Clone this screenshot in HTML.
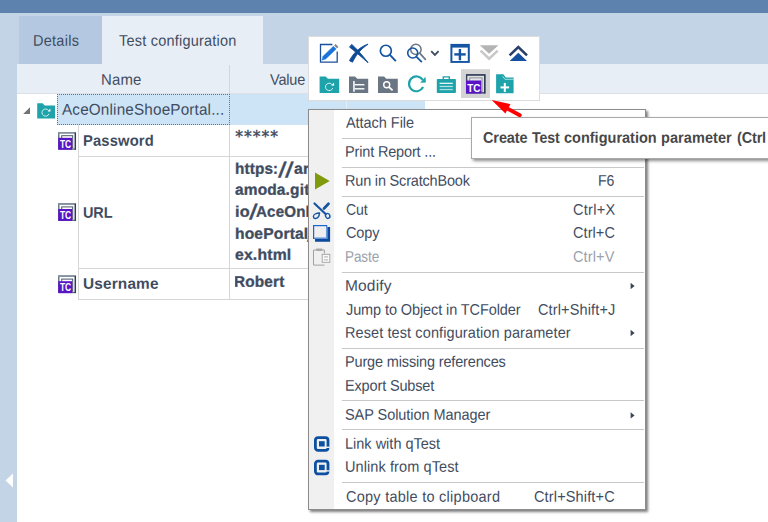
<!DOCTYPE html>
<html>
<head>
<meta charset="utf-8">
<title>Test configuration</title>
<style>
html,body{margin:0;padding:0;}
body{width:768px;height:522px;overflow:hidden;position:relative;background:#fff;font-family:"Liberation Sans",sans-serif;color:#3f4c60;}
.abs{position:absolute;}
.t{position:absolute;white-space:pre;line-height:1;}
#topbar{left:0;top:0;width:768px;height:13px;background:#5c82ad;}
#bg{left:0;top:13px;width:768px;height:51px;background:#c4d4e7;}
#left{left:0;top:13px;width:16.5px;height:509px;background:#c4d4e7;}
#tab1{left:19px;top:16px;width:83px;height:48px;background:#b4c9e1;}
#tab2{left:102px;top:16px;width:161px;height:48px;background:#e8eef6;}
#hdr{left:16.5px;top:64px;width:752px;height:30px;background:#e8eef6;border-bottom:1px solid #dde1e7;box-sizing:border-box;}
.vline{position:absolute;width:1px;background:#d6d6d6;}
.hline{position:absolute;height:1px;background:#d6d6d6;}
#selrow{left:57px;top:94px;width:367.6px;height:31px;background:#cde4f6;}
#selcell{left:57px;top:94px;width:173px;height:31px;border:1px dotted #6a6f78;box-sizing:border-box;}
#menu{left:308px;top:109px;width:338px;height:401px;background:#fff;border:1px solid #8c8c8c;box-sizing:border-box;box-shadow:2px 2px 2.5px rgba(0,0,0,.5);}
#gutter{left:309px;top:110px;width:25px;height:399px;background:#f0f0f0;}
.sep{position:absolute;left:342px;width:302px;height:1px;background:#c8c8c8;}
#toolbar{left:308px;top:36px;width:232px;height:65px;background:#fff;border:1px solid #dcdcdc;box-sizing:border-box;}
#tip{left:471px;top:117px;width:310px;height:42px;background:#fff;border:1px solid #a8a8a8;box-sizing:border-box;box-shadow:2px 2px 3px rgba(0,0,0,.45);}

#url .t{font-weight:bold;font-size:14.5px;-webkit-text-stroke:0.3px #3f4c60;}
.sl{display:inline-block;transform-origin:0 35%;transform:skewX(-11.5deg) scale(1.4,1.46);}
</style>
</head>
<body>
<div class="abs" id="topbar"></div>
<div class="abs" id="bg"></div>
<div class="abs" id="left"></div>
<div class="abs" id="tab1"></div>
<div class="abs" id="tab2"></div>
<div class="abs" id="hdr"></div>
<svg class="abs" style="left:5px;top:473px" width="9" height="15" viewBox="0 0 9 15"><path d="M8 0.5 L0.5 7.5 L8 14.5 Z" fill="#fff"/></svg>
<div class="vline" style="left:229px;top:65px;height:235px"></div>

<div class="abs" id="selrow"></div>
<div class="abs" id="selcell"></div>
<div class="vline" style="left:346px;top:94px;height:31px;background:#e4f1fb"></div>
<div class="vline" style="left:78px;top:125px;height:175px"></div>
<div class="hline" style="left:78px;top:156px;width:240px"></div>
<div class="hline" style="left:78px;top:268px;width:240px"></div>
<div class="hline" style="left:78px;top:299px;width:240px"></div>

<svg class="abs" style="left:0;top:0" width="768" height="522" viewBox="0 0 768 522"><path d="M30 107.2 V114 H23.2 Z" fill="#737373"/><path d="M37.2 103.2 H42.6 L44.6 105.4 H55.0 V118.60000000000001 H37.2 Z" fill="#1fa3ab"/><path d="M48.72 110.80 A3.6 3.6 0 1 0 48.98 113.83" stroke="#e0f4f5" stroke-width="0.9" fill="none"/><path d="M50.3 108.6 L50.5 111.5 L47.7 111.6 Z" fill="#fff"/><g transform="translate(58.2,132) scale(1.0)"><rect x="0.6" y="0.7" width="16.6" height="16.4" fill="#fff" stroke="#5a6678" stroke-width="1.3"/><rect x="0" y="0" width="17.8" height="1.6" fill="#8592a2"/><rect x="16.5" y="0.6" width="1.3" height="17.1" fill="#2e3c55"/><rect x="3.5" y="3.7" width="11" height="12" fill="#fff" stroke="#4a5568" stroke-width="1"/><rect x="0" y="5.8" width="14" height="11.9" fill="#5a14c8"/><text x="7.4" y="16.1" font-family="Liberation Sans,sans-serif" font-weight="bold" font-size="10.8" fill="#fff" text-anchor="middle" textLength="11.3" lengthAdjust="spacingAndGlyphs">TC</text></g><g transform="translate(58.2,203.2) scale(1.0)"><rect x="0.6" y="0.7" width="16.6" height="16.4" fill="#fff" stroke="#5a6678" stroke-width="1.3"/><rect x="0" y="0" width="17.8" height="1.6" fill="#8592a2"/><rect x="16.5" y="0.6" width="1.3" height="17.1" fill="#2e3c55"/><rect x="3.5" y="3.7" width="11" height="12" fill="#fff" stroke="#4a5568" stroke-width="1"/><rect x="0" y="5.8" width="14" height="11.9" fill="#5a14c8"/><text x="7.4" y="16.1" font-family="Liberation Sans,sans-serif" font-weight="bold" font-size="10.8" fill="#fff" text-anchor="middle" textLength="11.3" lengthAdjust="spacingAndGlyphs">TC</text></g><g transform="translate(58.2,275.4) scale(1.0)"><rect x="0.6" y="0.7" width="16.6" height="16.4" fill="#fff" stroke="#5a6678" stroke-width="1.3"/><rect x="0" y="0" width="17.8" height="1.6" fill="#8592a2"/><rect x="16.5" y="0.6" width="1.3" height="17.1" fill="#2e3c55"/><rect x="3.5" y="3.7" width="11" height="12" fill="#fff" stroke="#4a5568" stroke-width="1"/><rect x="0" y="5.8" width="14" height="11.9" fill="#5a14c8"/><text x="7.4" y="16.1" font-family="Liberation Sans,sans-serif" font-weight="bold" font-size="10.8" fill="#fff" text-anchor="middle" textLength="11.3" lengthAdjust="spacingAndGlyphs">TC</text></g></svg>
<span class="t" id="stars" style="left:235.3px;top:129.7px;font-family:'DejaVu Sans',sans-serif;font-size:15.5px;letter-spacing:1.0px;-webkit-text-stroke:0.4px #3f4c60">*****</span>
<div class="abs" id="url" style="left:235px;top:157px;width:73.6px;height:142px;overflow:hidden">
<span class="t" style="left:-0.21px;top:4.49px;letter-spacing:0.150px;transform:scale(1.0554,1.06) rotate(0.03deg);transform-origin:0 0;">https</span>
<span class="t" style="left:37.75px;top:4.49px;letter-spacing:0.000px;transform:scale(1.0000,1.06) rotate(0.03deg);transform-origin:0 0;">:</span>
<span class="t sl" style="left:44.80px;top:4.63px">/</span>
<span class="t sl" style="left:51.60px;top:4.63px">/</span>
<span class="t" style="left:58.95px;top:4.49px;letter-spacing:0.150px;transform:scale(1.0947,1.06) rotate(0.03deg);transform-origin:0 0;">ar</span>
<span class="t" style="left:0.07px;top:24.99px;letter-spacing:0.150px;transform:scale(1.0662,1.06) rotate(0.03deg);transform-origin:0 0;">amoda.git</span>
<span class="t" style="left:-0.28px;top:46.99px;letter-spacing:0.150px;transform:scale(1.1170,1.06) rotate(0.03deg);transform-origin:0 0;">io</span>
<span class="t sl" style="left:15.70px;top:47.13px">/</span>
<span class="t" style="left:21.31px;top:46.99px;letter-spacing:0.150px;transform:scale(1.0443,1.06) rotate(0.03deg);transform-origin:0 0;">AceOnl</span>
<span class="t" style="left:-0.23px;top:68.69px;letter-spacing:0.150px;transform:scale(1.0751,1.06) rotate(0.03deg);transform-origin:0 0;">hoePortal</span>
<span class="t sl" style="left:74.00px;top:68.83px">/</span>
<span class="t" style="left:-0.06px;top:90.29px;letter-spacing:0.150px;transform:scale(1.0880,1.06) rotate(0.03deg);transform-origin:0 0;">ex.html</span>
<span class="t" style="left:-0.58px;top:116.59px;letter-spacing:0.150px;transform:scale(1.0589,1.06) rotate(0.03deg);transform-origin:0 0;">Robert</span>
</div>

<div class="abs" id="menu"></div>
<div class="abs" id="gutter"></div>
<div class="sep" style="top:138px"></div>
<div class="sep" style="top:167px"></div>
<div class="sep" style="top:196px"></div>
<div class="sep" style="top:272px"></div>
<div class="sep" style="top:348px"></div>
<div class="sep" style="top:400px"></div>
<div class="sep" style="top:429px"></div>
<div class="sep" style="top:482px"></div>
<svg class="abs" style="left:0;top:0" width="768" height="522" viewBox="0 0 768 522"><path d="M315 172.5 L329.7 181 L315 189.4 Z" fill="#7f9a0a"/><path d="M314.5 203.5 L325.6 214" stroke="#1455a3" stroke-width="2.2" fill="none" stroke-linecap="round"/><path d="M328.5 203.8 L324 208.5" stroke="#1455a3" stroke-width="2.7" fill="none" stroke-linecap="round"/><ellipse cx="327.7" cy="215.9" rx="2.1" ry="2.5" fill="none" stroke="#1455a3" stroke-width="1.4" transform="rotate(-25 327.7 215.9)"/><path d="M319.6 213 C317 213 313.4 214 313.4 216.5 C313.4 219 316.6 219 318 217.3 C319 216 319.5 214.4 319.6 213 Z" fill="none" stroke="#1455a3" stroke-width="1.4" stroke-linejoin="round"/><path d="M315 239 V241.7 H330.1 V227 H327.2 V239 Z" fill="#0d4a9c"/><rect x="313.6" y="225.6" width="13" height="12.8" fill="#efefef" stroke="#1a66d0" stroke-width="1.2"/><path d="M314.4 238.2 H326.8 V226.5" stroke="#7aa5dd" stroke-width="1.2" fill="none"/><path d="M324.4 265.1 H313.5 V250 H324.4 V253.5" stroke="#a0a0a0" stroke-width="1" fill="none"/><rect x="316" y="248.4" width="6.4" height="2.5" rx="0.8" fill="#a8a8a8"/><rect x="322.2" y="254.3" width="7.6" height="8" fill="#fafafa" stroke="#a0a0a0" stroke-width="0.9"/><path d="M324 256.9 H328 M324 259.9 H328" stroke="#a8a8a8" stroke-width="0.9"/><g transform="translate(314,436.2)"><rect x="1.4" y="1.4" width="12.6" height="12.7" rx="2.6" fill="none" stroke="#0d4fa0" stroke-width="2.8"/><rect x="5" y="5" width="5.7" height="5.3" fill="#0d4fa0"/><rect x="10.7" y="10.4" width="5" height="1.4" fill="#f0f0f0"/></g><g transform="translate(314,459.8)"><rect x="1.4" y="1.4" width="12.6" height="12.7" rx="2.6" fill="none" stroke="#0d4fa0" stroke-width="2.8"/><rect x="5" y="5" width="5.7" height="5.3" fill="#0d4fa0"/><rect x="10.7" y="10.4" width="5" height="1.4" fill="#f0f0f0"/></g><path d="M630.6 282.8 L634.6 286 L630.6 289.2 Z" fill="#3c4556"/><path d="M630.6 329.8 L634.6 333 L630.6 336.2 Z" fill="#3c4556"/><path d="M630.6 412.2 L634.6 415.4 L630.6 418.59999999999997 Z" fill="#3c4556"/></svg>

<span class="t" style="left:32.71px;top:32.89px;font-size:14.5px;letter-spacing:0.263px;transform:scale(1.0000,1.06) rotate(0.03deg);transform-origin:0 0;">Details</span>
<span class="t" style="left:118.77px;top:32.99px;font-size:14.5px;letter-spacing:0.220px;transform:scale(1.0000,1.06) rotate(0.03deg);transform-origin:0 0;">Test configuration</span>
<span class="t" style="left:101.38px;top:71.79px;font-size:14.5px;letter-spacing:0.150px;transform:scale(1.0290,1.06) rotate(0.03deg);transform-origin:0 0;">Name</span>
<span class="t" style="left:270.29px;top:71.79px;font-size:14.5px;letter-spacing:-0.190px;transform:scale(1.0000,1.06) rotate(0.03deg);transform-origin:0 0;">Value</span>
<span class="t" style="left:61.53px;top:101.72px;font-size:14.8px;letter-spacing:0.150px;transform:scale(1.0336,1.06) rotate(0.03deg);transform-origin:0 0;">AceOnlineShoePortal...</span>
<span class="t" style="left:82.61px;top:133.39px;font-size:14.5px;letter-spacing:0.150px;transform:scale(1.0170,1.06) rotate(0.03deg);transform-origin:0 0;font-weight:bold;">Password</span>
<span class="t" style="left:82.72px;top:205.19px;font-size:14.5px;letter-spacing:-0.100px;transform:scale(1.0000,1.06) rotate(0.03deg);transform-origin:0 0;font-weight:bold;">URL</span>
<span class="t" style="left:82.65px;top:276.49px;font-size:14.5px;letter-spacing:0.150px;transform:scale(1.0607,1.06) rotate(0.03deg);transform-origin:0 0;font-weight:bold;">Username</span>
<span class="t" style="left:346.16px;top:114.89px;font-size:14.5px;letter-spacing:-0.043px;transform:scale(1.0000,1.06) rotate(0.03deg);transform-origin:0 0;">Attach File</span>
<span class="t" style="left:345.31px;top:143.89px;font-size:14.5px;letter-spacing:-0.156px;transform:scale(1.0000,1.06) rotate(0.03deg);transform-origin:0 0;">Print Report ...</span>
<span class="t" style="left:345.31px;top:172.79px;font-size:14.5px;letter-spacing:-0.192px;transform:scale(1.0000,1.06) rotate(0.03deg);transform-origin:0 0;">Run in ScratchBook</span>
<span class="t" style="left:345.88px;top:202.09px;font-size:14.5px;letter-spacing:-0.100px;transform:scale(0.9722,1.06) rotate(0.03deg);transform-origin:0 0;">Cut</span>
<span class="t" style="left:345.85px;top:225.19px;font-size:14.5px;letter-spacing:-0.129px;transform:scale(1.0000,1.06) rotate(0.03deg);transform-origin:0 0;">Copy</span>
<span class="t" style="left:345.40px;top:248.69px;font-size:14.5px;letter-spacing:-0.100px;transform:scale(0.9313,1.06) rotate(0.03deg);transform-origin:0 0;color:#9aa1ab;">Paste</span>
<span class="t" style="left:345.22px;top:277.79px;font-size:14.5px;letter-spacing:0.150px;transform:scale(1.0691,1.06) rotate(0.03deg);transform-origin:0 0;">Modify</span>
<span class="t" style="left:346.13px;top:301.69px;font-size:14.5px;letter-spacing:-0.100px;transform:scale(1.0000,1.06) rotate(0.03deg);transform-origin:0 0;">Jump to Object in TCFolder</span>
<span class="t" style="left:345.31px;top:324.89px;font-size:14.5px;letter-spacing:0.097px;transform:scale(1.0000,1.06) rotate(0.03deg);transform-origin:0 0;">Reset test configuration parameter</span>
<span class="t" style="left:345.31px;top:354.09px;font-size:14.5px;letter-spacing:-0.154px;transform:scale(1.0000,1.06) rotate(0.03deg);transform-origin:0 0;">Purge missing references</span>
<span class="t" style="left:345.31px;top:377.59px;font-size:14.5px;letter-spacing:-0.146px;transform:scale(1.0000,1.06) rotate(0.03deg);transform-origin:0 0;">Export Subset</span>
<span class="t" style="left:345.40px;top:406.99px;font-size:14.5px;letter-spacing:-0.062px;transform:scale(1.0000,1.06) rotate(0.03deg);transform-origin:0 0;">SAP Solution Manager</span>
<span class="t" style="left:345.31px;top:435.59px;font-size:14.5px;letter-spacing:0.004px;transform:scale(1.0000,1.06) rotate(0.03deg);transform-origin:0 0;">Link with qTest</span>
<span class="t" style="left:345.37px;top:458.59px;font-size:14.5px;letter-spacing:0.096px;transform:scale(1.0000,1.06) rotate(0.03deg);transform-origin:0 0;">Unlink from qTest</span>
<span class="t" style="left:345.85px;top:488.79px;font-size:14.5px;letter-spacing:0.260px;transform:scale(1.0000,1.06) rotate(0.03deg);transform-origin:0 0;">Copy table to clipboard</span>
<span class="t" style="left:598.05px;top:172.79px;font-size:14.5px;letter-spacing:-0.100px;transform:scale(0.9739,1.06) rotate(0.03deg);transform-origin:0 0;">F6</span>
<span class="t" style="left:572.75px;top:202.09px;font-size:14.5px;letter-spacing:0.273px;transform:scale(1.0000,1.06) rotate(0.03deg);transform-origin:0 0;">Ctrl+X</span>
<span class="t" style="left:572.75px;top:225.19px;font-size:14.5px;letter-spacing:0.076px;transform:scale(1.0000,1.06) rotate(0.03deg);transform-origin:0 0;">Ctrl+C</span>
<span class="t" style="left:572.75px;top:248.69px;font-size:14.5px;letter-spacing:0.129px;transform:scale(1.0000,1.06) rotate(0.03deg);transform-origin:0 0;color:#9aa1ab;">Ctrl+V</span>
<span class="t" style="left:537.55px;top:301.69px;font-size:14.5px;letter-spacing:0.139px;transform:scale(1.0000,1.06) rotate(0.03deg);transform-origin:0 0;">Ctrl+Shift+J</span>
<span class="t" style="left:533.85px;top:488.79px;font-size:14.5px;letter-spacing:0.152px;transform:scale(1.0000,1.06) rotate(0.03deg);transform-origin:0 0;">Ctrl+Shift+C</span>

<div class="abs" id="toolbar"></div>
<svg class="abs" style="left:0;top:0" width="768" height="522" viewBox="0 0 768 522"><path d="M332.4 44.5 H320.5 V62.2 H337.2 V51.4" fill="none" stroke="#1b4f9b" stroke-width="1.3"/><path d="M321.9 60.2 L323.0 56.2 L333.4 46.2 L336.2 49.0 L325.8 59.0 Z" fill="#1a73d9" stroke="#1a73d9" stroke-width="0.4" stroke-linejoin="round"/><path d="M334.2 45.4 L335.6 44.0 L338.5 46.9 L337.0 48.3 Z" fill="#7a828c"/><path d="M349.56 47.14 L350.24 47.66 L350.99 48.24 L351.80 48.89 L352.67 49.59 L353.61 50.35 L354.60 51.18 L355.66 52.06 L356.78 53.00 L357.96 54.00 L359.20 55.06 L360.51 56.18 L361.87 57.36 L363.29 58.60 L364.78 59.90 L366.32 61.25 L367.93 62.67 L368.07 62.53 L366.73 60.86 L365.43 59.27 L364.17 57.74 L362.96 56.29 L361.78 54.91 L360.65 53.60 L359.56 52.37 L358.52 51.20 L357.51 50.11 L356.55 49.09 L355.63 48.14 L354.75 47.26 L353.92 46.45 L353.12 45.72 L352.36 45.05 L351.64 44.46 Z" fill="#0e4a96" stroke="#0e4a96" stroke-width="0.9" stroke-linejoin="round"/><path d="M367.96 44.11 L366.52 44.66 L365.11 45.28 L363.73 45.96 L362.39 46.71 L361.08 47.52 L359.82 48.40 L358.59 49.35 L357.40 50.36 L356.25 51.43 L355.14 52.56 L354.08 53.76 L353.07 55.02 L352.10 56.33 L351.18 57.71 L350.31 59.14 L349.48 60.63 L352.52 62.17 L353.23 60.76 L353.98 59.39 L354.75 58.07 L355.56 56.78 L356.39 55.54 L357.26 54.34 L358.17 53.17 L359.10 52.04 L360.08 50.95 L361.09 49.90 L362.14 48.88 L363.24 47.89 L364.37 46.94 L365.55 46.02 L366.77 45.14 L368.04 44.29 Z" fill="#0e4a96" stroke="#0e4a96" stroke-width="0.9" stroke-linejoin="round"/><circle cx="385.85" cy="50.76" r="5.5" fill="none" stroke="#1455a3" stroke-width="1.7"/><path d="M389.9 54.9 L395.8 61.1" stroke="#1455a3" stroke-width="1.9" fill="none"/><circle cx="415.9" cy="49.4" r="5.2" fill="none" stroke="#6a7585" stroke-width="1.5"/><path d="M419.7 53.2 L425.8 59.8" stroke="#6a7585" stroke-width="1.7" fill="none"/><circle cx="412.7" cy="53" r="5" fill="none" stroke="#1455a3" stroke-width="1.6"/><path d="M416.3 56.7 L421.8 62.1" stroke="#1455a3" stroke-width="1.8" fill="none"/><path d="M431.2 51.2 L434.9 54.9 L438.6 51.2" stroke="#3c4a62" stroke-width="1.8" fill="none"/><rect x="450.4" y="43.9" width="19.4" height="19" fill="#1455a3"/><rect x="452.4" y="47.6" width="15.4" height="13.4" fill="#fff"/><rect x="454.3" y="53.2" width="11.4" height="2.4" fill="#1455a3"/><rect x="458.7" y="49" width="2.4" height="11.3" fill="#1455a3"/><path d="M479.8 45.3 H498.5 L489.15 53.8 Z" fill="#b4b4b4"/><path d="M480.6 50.6 L489.15 58.8 L497.7 50.6" stroke="#c8c8c8" stroke-width="2.6" fill="none"/><path d="M509.6 55.4 L518.3 47 L527 55.4" stroke="#2a4068" stroke-width="2.6" fill="none"/><path d="M509.7 60.9 H527 L518.3 52.7 Z" fill="#14509f"/><path d="M319.6 76.4 H325.70000000000005 L327.90000000000003 78.80000000000001 H339.20000000000005 V92.9 H319.6 Z" fill="#1fa3ab"/><path d="M332.40 85.05 A3.7 3.7 0 1 0 332.68 88.17" stroke="#e8f7f8" stroke-width="0.9" fill="none"/><path d="M334.0 82.6 L334.2 85.6 L331.3 85.7 Z" fill="#fff"/><path d="M349 76.4 H355.1 L357.3 78.80000000000001 H368.2 V92.9 H349 Z" fill="#6b7684"/><rect x="353.2" y="81" width="1.5" height="10.8" fill="#fff"/><rect x="354.6" y="84" width="9.8" height="1.4" fill="#fff"/><rect x="354.6" y="88.1" width="9.8" height="1.4" fill="#fff"/><path d="M378 76.4 H384.1 L386.3 78.80000000000001 H397.8 V92.9 H378 Z" fill="#6b7684"/><circle cx="386.7" cy="84.7" r="3" fill="none" stroke="#fff" stroke-width="1.4"/><path d="M388.9 87 L392.6 90.3" stroke="#fff" stroke-width="1.7" fill="none"/><path d="M422.73 79.93 A7.4 7.4 0 1 0 423.10 87.09" stroke="#1fa3ab" stroke-width="2.2" fill="none"/><path d="M425.5 76.8 L425.9 82.5 L420.2 82.7 Z" fill="#1fa3ab"/><rect x="436.8" y="79" width="19.1" height="14" rx="0.8" fill="#1fa3ab"/><path d="M443.3 79.6 V76.9 H449.3 V79.6" stroke="#1fa3ab" stroke-width="1.4" fill="none"/><rect x="439.6" y="82.7" width="13.2" height="1.3" fill="#e4f5f6"/><rect x="439.6" y="85.8" width="13.2" height="1.3" fill="#b4e2e5"/><rect x="439.6" y="88.9" width="13.2" height="1.3" fill="#a4dce0"/><rect x="461" y="69.2" width="29" height="28.8" fill="#d4d4d4"/><g transform="translate(466,74.2) scale(1.09)"><rect x="0.6" y="0.7" width="16.6" height="16.4" fill="#e2e2e2" stroke="#3a4560" stroke-width="1.3"/><rect x="0" y="0" width="17.8" height="1.2" fill="#3a4560"/><rect x="16.5" y="0.6" width="1.3" height="17.1" fill="#2e3c55"/><rect x="3.5" y="3.4" width="11.2" height="12.4" fill="#f4f4f4" stroke="#8a9099" stroke-width="1"/><rect x="5.6" y="5.4" width="8" height="9" fill="#fff" stroke="#c0c4ca" stroke-width="0.8"/><rect x="0" y="5.8" width="14" height="11.9" fill="#5a14c8"/><text x="7.2" y="16.1" font-family="Liberation Sans,sans-serif" font-weight="bold" font-size="10.8" fill="#fff" text-anchor="middle" textLength="12.2" lengthAdjust="spacingAndGlyphs">TC</text></g><path d="M496.1 74.2 H503.4 L505.8 77.4 H513.6 V93.2 H496.1 Z" fill="#1fa3ab"/><path d="M502.6 76.4 L505 79.3 H513.6" stroke="#e6f6f7" stroke-width="0.7" fill="none"/><rect x="500.5" y="86.4" width="8.6" height="2" fill="#fff"/><rect x="503.8" y="82.9" width="2" height="9.1" fill="#fff"/></svg><svg class="abs" style="left:0;top:0" width="768" height="522" viewBox="0 0 768 522"><path d="M507.5 108.6 L519.8 115.2" stroke="#ff0000" stroke-width="3.9" fill="none" stroke-linecap="round"/><path d="M491.6 99.9 L510.5 104.2 L505.4 113.5 Z" fill="#ff0000"/></svg>

<div class="abs" id="tip"></div>
<span class="t" style="left:483.17px;top:130.09px;font-size:14.5px;letter-spacing:-0.116px;transform:scale(1.0000,1.06) rotate(0.03deg);transform-origin:0 0;font-weight:bold;color:#474747;">Create</span>
<span class="t" style="left:532.36px;top:130.09px;font-size:14.5px;letter-spacing:-0.100px;transform:scale(0.9752,1.06) rotate(0.03deg);transform-origin:0 0;font-weight:bold;color:#474747;">Test</span>
<span class="t" style="left:564.29px;top:130.09px;font-size:14.5px;letter-spacing:0.005px;transform:scale(1.0000,1.06) rotate(0.03deg);transform-origin:0 0;font-weight:bold;color:#474747;">configuration</span>
<span class="t" style="left:660.77px;top:130.09px;font-size:14.5px;letter-spacing:0.080px;transform:scale(1.0000,1.06) rotate(0.03deg);transform-origin:0 0;font-weight:bold;color:#474747;">parameter</span>
<span class="t" style="left:736.75px;top:130.09px;font-size:14.5px;letter-spacing:-0.164px;transform:scale(1.0000,1.06) rotate(0.03deg);transform-origin:0 0;font-weight:bold;color:#474747;">(Ctrl</span>
</body>
</html>
